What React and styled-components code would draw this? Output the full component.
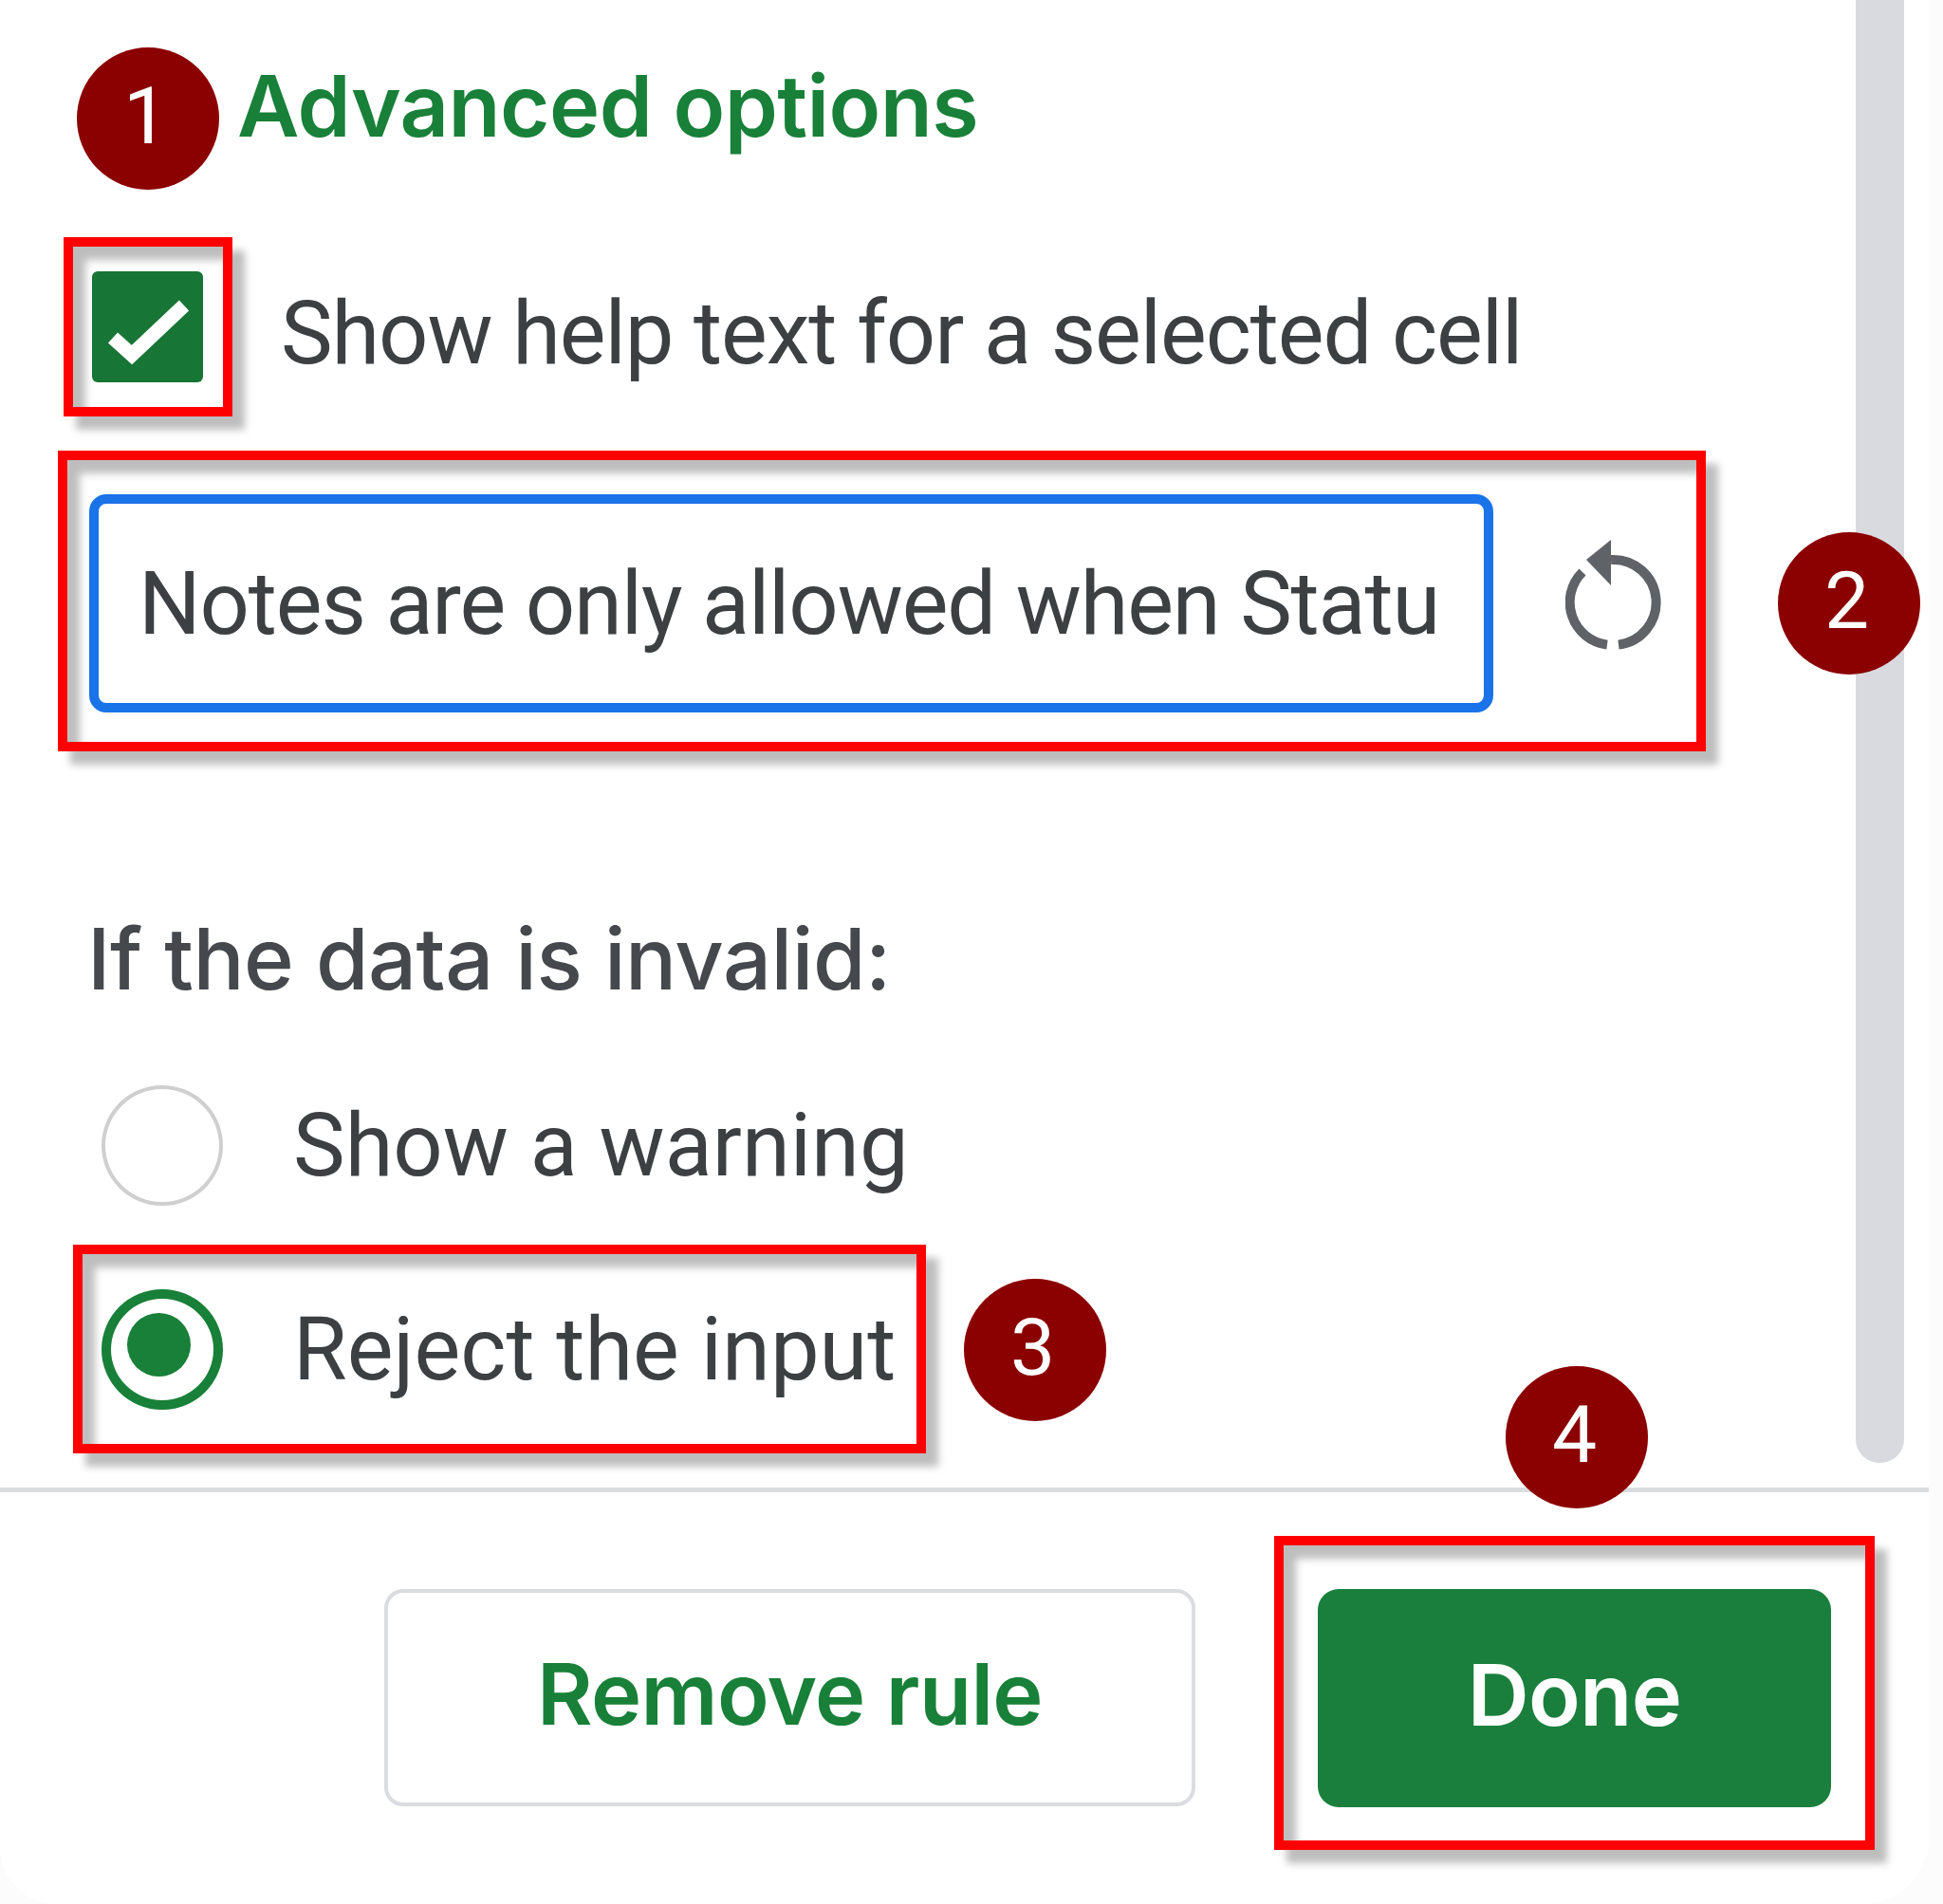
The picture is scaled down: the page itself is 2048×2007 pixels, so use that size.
import React from "react";
import styled, { createGlobalStyle } from "styled-components";

const Global = createGlobalStyle`
  html, body { margin: 0; padding: 0; background: #fbfcfb; }
  * { box-sizing: border-box; }
`;

const Page = styled.div`
  position: relative;
  width: 2048px;
  height: 2007px;
  overflow: hidden;
  font-family: Roboto, "Liberation Sans", sans-serif;
  color: #3c4043;
`;

const Panel = styled.div`
  width: 2033px;
  height: 2007px;
  background: #fff;
  border-radius: 0 0 70px 60px;
  display: flex;
  flex-direction: column;
`;

const Body = styled.div`
  height: 1568px;
  display: flex;
  align-items: flex-start;
`;

const Content = styled.div`
  flex: 1;
  padding: 62px 0 0 94px;
  display: flex;
  flex-direction: column;
`;

const Scrollbar = styled.div`
  width: 51px;
  height: 1542px;
  margin-right: 26px;
  background: #d9dadf;
  border-radius: 0 0 25px 25px;
`;

const Title = styled.h2`
  margin: 0 0 0 156px;
  font-family: Inter, Roboto, sans-serif;
  font-size: 90px;
  line-height: 100px;
  font-weight: 600;
  letter-spacing: -0.55px;
  color: #188038;
`;

const CheckRow = styled.label`
  margin: 124px 0 0 3px;
  height: 117px;
  display: flex;
  align-items: center;
  gap: 82px;
`;

const CheckBox = styled.span`
  width: 117px;
  height: 117px;
  border-radius: 6px;
  background: #177535;
  display: block;
  flex: none;
`;

const Label = styled.span`
  font-size: 92px;
  line-height: 100px;
  white-space: nowrap;
  padding-top: ${(p) => p.$drop || 0}px;
  letter-spacing: ${(p) => p.$track || 0}px;
`;

const InputRow = styled.div`
  margin-top: 118px;
  display: flex;
  align-items: center;
`;

const TextBox = styled.div`
  width: 1480px;
  height: 230px;
  border: 10px solid #1a73e8;
  border-radius: 18px;
  padding-left: 42px;
  display: flex;
  align-items: center;
  font-size: 92px;
  letter-spacing: -1.15px;
  white-space: nowrap;
  overflow: hidden;
`;

const ResetIcon = styled.svg`
  width: 101px;
  height: 118px;
  margin: 0 0 20px 76px;
  flex: none;
`;

const Section = styled.div`
  margin: 210px 0 0 -2px;
  font-family: Inter, Roboto, sans-serif;
  font-size: 90px;
  line-height: 100px;
  font-weight: 500;
  letter-spacing: -0.5px;
  color: #45484c;
`;

const RadioRow = styled.div`
  margin-top: ${(p) => p.$gap}px;
  padding-left: 13px;
  height: 127px;
  display: flex;
  align-items: center;
  gap: 74px;
`;

const Radio = styled.span`
  width: 128px;
  height: 127px;
  border-radius: 50%;
  border: ${(p) => (p.$on ? "10px solid #188038" : "4px solid #cfcfcf")};
  flex: none;
  display: flex;
  align-items: center;
  justify-content: center;
`;

const RadioDot = styled.span`
  width: 67px;
  height: 67px;
  border-radius: 50%;
  background: #188038;
  margin: 0 7px 10px 0;
`;

const Divider = styled.div`
  height: 5px;
  background: #dadce0;
`;

const Footer = styled.div`
  padding: 102px 103px 0 0;
  display: flex;
  justify-content: flex-end;
  align-items: flex-start;
  gap: 129px;
`;

const GhostButton = styled.button`
  width: 855px;
  height: 229px;
  padding: 0 0 8px;
  border: 4px solid #dadce0;
  border-radius: 20px;
  background: #fff;
  color: #188038;
  font: 600 90px Inter, Roboto, sans-serif;
  letter-spacing: -0.6px;
`;

const PrimaryButton = styled.button`
  width: 541px;
  height: 230px;
  padding: 0 0 8px;
  border: 0;
  border-radius: 22px;
  background: #1a7f3c;
  color: #fff;
  font: 600 90px Inter, Roboto, sans-serif;
  letter-spacing: -0.6px;
`;

const Callout = styled.div`
  position: absolute;
  left: ${(p) => p.$x}px;
  top: ${(p) => p.$y}px;
  width: ${(p) => p.$w}px;
  height: ${(p) => p.$h}px;
  border: 10px solid #ff0000;
  box-shadow: 13px 14px 8px rgba(0, 0, 0, 0.26),
    inset 13px 14px 8px rgba(0, 0, 0, 0.26);
`;

const Badge = styled.div`
  position: absolute;
  left: ${(p) => p.$x}px;
  top: ${(p) => p.$y}px;
  width: 150px;
  height: 150px;
  padding-right: 5px;
  border-radius: 50%;
  background: #8b0000;
  color: #fff;
  font: 84px/146px Roboto, "Liberation Sans", sans-serif;
  text-align: center;
`;

const callouts = [
  { x: 67, y: 250, w: 178, h: 189 },
  { x: 61, y: 475, w: 1737, h: 317 },
  { x: 77, y: 1312, w: 899, h: 220 },
  { x: 1343, y: 1619, w: 633, h: 331 },
];

const badges = [
  { n: 1, x: 81, y: 50 },
  { n: 2, x: 1874, y: 561 },
  { n: 3, x: 1016, y: 1348 },
  { n: 4, x: 1587, y: 1440 },
];

export default function App() {
  return (
    <Page>
      <Global />
      <Panel>
        <Body>
          <Content>
            <Title>Advanced options</Title>
            <CheckRow>
              <CheckBox>
                <svg width="117" height="117" viewBox="0 0 117 117">
                  <polyline points="22,70 42,88 97,36" fill="none" stroke="#fff" strokeWidth="15" />
                </svg>
              </CheckBox>
              <Label $drop={15} $track={-1.1}>Show help text for a selected cell</Label>
            </CheckRow>
            <InputRow>
              <TextBox>Notes are only allowed when Statu</TextBox>
              <ResetIcon viewBox="0 0 101 118">
                <g fill="none" stroke="#5f6368" strokeWidth="10">
                  <path d="M48 23A45 45 0 0 1 56 112.6" />
                  <path d="M18 36A45 45 0 0 0 44 112.6" />
                </g>
                <polygon points="48,2 22,23 48,50" fill="#5f6368" />
              </ResetIcon>
            </InputRow>
            <Section>If the data is invalid:</Section>
            <RadioRow $gap={83}>
              <Radio />
              <Label>Show a warning</Label>
            </RadioRow>
            <RadioRow $gap={88}>
              <Radio $on>
                <RadioDot />
              </Radio>
              <Label>Reject the input</Label>
            </RadioRow>
          </Content>
          <Scrollbar />
        </Body>
        <Divider />
        <Footer>
          <GhostButton>Remove rule</GhostButton>
          <PrimaryButton>Done</PrimaryButton>
        </Footer>
      </Panel>
      {callouts.map((c) => (
        <Callout key={c.x} $x={c.x} $y={c.y} $w={c.w} $h={c.h} />
      ))}
      {badges.map((b) => (
        <Badge key={b.n} $x={b.x} $y={b.y}>
          {b.n}
        </Badge>
      ))}
    </Page>
  );
}
